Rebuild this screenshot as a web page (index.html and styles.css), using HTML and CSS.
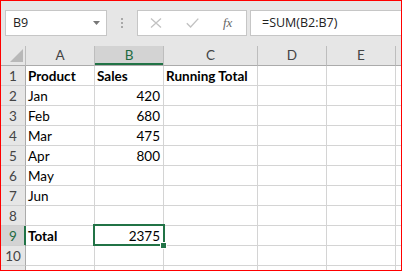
FILE: index.html
```html
<!DOCTYPE html>
<html>
<head>
<meta charset="utf-8">
<link rel="stylesheet" href="styles.css">
</head>
<body>
<div class="frame">
  <div class="toolbar">
    <div class="namebox">
      <span class="name">B9</span>
      <svg class="dd" width="7" height="4" viewBox="0 0 7 4"><path d="M0 0H7L3.5 4Z" fill="#777"/></svg>
    </div>
    <div class="grip"><i></i><i></i><i></i></div>
    <div class="btnbox">
      <svg class="ico" width="12" height="10" viewBox="0 0 12 10"><path d="M1 0.5L11 9.5M11 0.5L1 9.5" stroke="#c2c2c2" stroke-width="1.3" fill="none"/></svg>
      <svg class="ico" width="13" height="10" viewBox="0 0 13 10"><path d="M0.8 5.2L4.6 9L12.3 0.6" stroke="#c2c2c2" stroke-width="1.4" fill="none"/></svg>
      <span class="fx">fx</span>
    </div>
    <div class="formula">=SUM(B2:B7)</div>
  </div>
  <div class="sheet">
    <div class="corner"><svg width="13" height="13" viewBox="0 0 13 13"><path d="M13 0V13H0Z" fill="#b8b8b8"/></svg></div>
    <div class="ch">A</div>
    <div class="ch sel">B</div>
    <div class="ch">C</div>
    <div class="ch">D</div>
    <div class="ch">E</div>
    <div class="ch last"></div>

    <div class="rh">1</div><div class="c b">Product</div><div class="c b">Sales</div><div class="c b">Running Total</div><div class="c"></div><div class="c"></div><div class="c last"></div>
    <div class="rh">2</div><div class="c">Jan</div><div class="c n">420</div><div class="c"></div><div class="c"></div><div class="c"></div><div class="c last"></div>
    <div class="rh">3</div><div class="c">Feb</div><div class="c n">680</div><div class="c"></div><div class="c"></div><div class="c"></div><div class="c last"></div>
    <div class="rh">4</div><div class="c">Mar</div><div class="c n">475</div><div class="c"></div><div class="c"></div><div class="c"></div><div class="c last"></div>
    <div class="rh">5</div><div class="c">Apr</div><div class="c n">800</div><div class="c"></div><div class="c"></div><div class="c"></div><div class="c last"></div>
    <div class="rh">6</div><div class="c">May</div><div class="c"></div><div class="c"></div><div class="c"></div><div class="c"></div><div class="c last"></div>
    <div class="rh">7</div><div class="c">Jun</div><div class="c"></div><div class="c"></div><div class="c"></div><div class="c"></div><div class="c last"></div>
    <div class="rh">8</div><div class="c"></div><div class="c"></div><div class="c"></div><div class="c"></div><div class="c"></div><div class="c last"></div>
    <div class="rh selr">9</div><div class="c b">Total</div><div class="c n active">2375<span class="selbox"></span><span class="handle"></span></div><div class="c"></div><div class="c"></div><div class="c"></div><div class="c last"></div>
    <div class="rh">10</div><div class="c"></div><div class="c"></div><div class="c"></div><div class="c"></div><div class="c"></div><div class="c last"></div>
    <div class="rh"></div><div class="c"></div><div class="c"></div><div class="c"></div><div class="c"></div><div class="c"></div><div class="c last"></div>
  </div>
</div>
</body>
</html>
```

FILE: styles.css
```css
* { box-sizing: border-box; }
html, body { margin: 0; padding: 0; background: #fff; }
.frame {
  width: 402px;
  height: 271px;
  border: 1px solid #ff0000;
  overflow: hidden;
  background: #fff;
}
.toolbar {
  height: 45px;
  background: #e6e6e6;
  display: flex;
  align-items: flex-start;
  padding: 9px 0 0 4px;
  font-family: "Open Sans", "DejaVu Sans", sans-serif;
}
.namebox {
  width: 102px;
  height: 26px;
  background: #fff;
  border: 1px solid #c6c6c6;
  display: flex;
  align-items: center;
  justify-content: space-between;
  padding: 0 6px 0 7px;
  font-size: 12.5px;
  color: #222;
}
.name { line-height: 24px; }
.grip {
  width: 30px;
  height: 26px;
  display: flex;
  flex-direction: column;
  align-items: center;
  padding-top: 8px;
  gap: 2px;
}
.grip i {
  display: block;
  width: 2px;
  height: 2px;
  background: #a8a8a8;
}
.btnbox {
  width: 110px;
  height: 26px;
  background: #fff;
  border: 1px solid #c6c6c6;
  display: flex;
  align-items: center;
  padding-left: 12px;
}
.btnbox .ico:nth-child(2) { margin-left: 24px; }
.fx {
  margin-left: 24px;
  font-family: "Liberation Serif", "DejaVu Serif", serif;
  font-style: italic;
  font-size: 13px;
  color: #666;
  line-height: 24px;
}
.formula {
  flex: 1;
  height: 26px;
  margin-left: 3px;
  background: #fff;
  border: 1px solid #c6c6c6;
  border-right: none;
  padding-left: 11px;
  font-size: 12.5px;
  line-height: 24px;
  color: #222;
}
.sheet {
  display: grid;
  grid-template-columns: 25px 69px 69px 94px 69px 69px 5px;
  grid-auto-rows: 20px;
  font-family: "Lato", "Liberation Sans", sans-serif;
  font-size: 13.5px;
}
.corner, .ch {
  background: #e6e6e6;
  border-right: 1px solid #bdbdbd;
  border-bottom: 1px solid #ababab;
}
.corner {
  display: flex;
  align-items: flex-end;
  justify-content: flex-end;
  padding: 0 2px 3px 0;
}
.ch {
  color: #444;
  text-align: center;
  line-height: 19px;
}
.ch.sel {
  background: #d3d3d3;
  color: #1e6b41;
  box-shadow: inset 0 -2px 0 #217346;
}
.ch.last { border-right: none; }
.rh {
  background: #e6e6e6;
  border-right: 1px solid #ababab;
  border-bottom: 1px solid #cfcfcf;
  color: #444;
  text-align: center;
  line-height: 20px;
}
.rh.selr {
  background: #d3d3d3;
  color: #1e6b41;
  border-right-color: #217346;
  box-shadow: inset -1px 0 0 #217346;
}
.c {
  border-right: 1px solid #d4d4d4;
  border-bottom: 1px solid #d4d4d4;
  color: #000;
  padding: 0 2px;
  line-height: 20px;
  white-space: nowrap;
  overflow: visible;
}
.c.last { border-right: none; }
.c.b { font-weight: bold; }
.c.n { text-align: right; padding-right: 3px; }
.active { position: relative; }
.selbox {
  position: absolute;
  left: -2px;
  top: -2px;
  width: 72px;
  height: 22px;
  border: 2px solid #217346;
}
.handle {
  position: absolute;
  left: 65px;
  top: 16px;
  width: 7px;
  height: 7px;
  background: #217346;
  border: 1px solid #fff;
}
```
